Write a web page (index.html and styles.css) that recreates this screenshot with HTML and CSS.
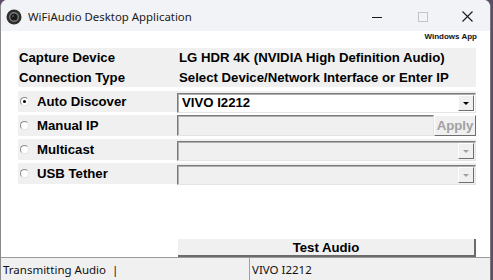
FILE: index.html
```html
<!DOCTYPE html>
<html>
<head>
<meta charset="utf-8">
<link rel="stylesheet" href="styles.css">
</head>
<body>
<div class="window">
  <div class="titlebar">
    <svg class="appicon" width="16" height="16" viewBox="0 0 16 16">
      <circle cx="8" cy="8" r="7.5" fill="#2e2e2e"/>
      <circle cx="8" cy="8" r="5" fill="#7a7a7a"/>
      <circle cx="8" cy="8" r="3.6" fill="#1c1c1c"/>
      <circle cx="7" cy="7" r="1" fill="#555"/>
    </svg>
    <span class="title">WiFiAudio Desktop Application</span>
    <div class="caption">
      <span class="cbtn min"><svg width="10" height="10" viewBox="0 0 10 10"><path d="M0 5.5H10" stroke="#1a1a1a" stroke-width="1"/></svg></span>
      <span class="cbtn max"><svg width="10" height="10" viewBox="0 0 10 10"><rect x="0.5" y="0.5" width="9" height="9" fill="none" stroke="#c4c4c4" stroke-width="1"/></svg></span>
      <span class="cbtn close"><svg width="11" height="11" viewBox="0 0 11 11"><path d="M0.5 0.5L10.5 10.5M10.5 0.5L0.5 10.5" stroke="#1a1a1a" stroke-width="1.1"/></svg></span>
    </div>
  </div>
  <div class="client">
    <div class="brand">Windows App</div>
    <div class="info">
      <div class="irow"><span class="lbl">Capture Device</span><span class="val">LG HDR 4K (NVIDIA High Definition Audio)</span></div>
      <div class="irow"><span class="lbl">Connection Type</span><span class="val">Select Device/Network Interface or Enter IP</span></div>
    </div>
    <div class="opts">
      <div class="orow">
        <label class="radio"><span class="rb checked"></span>Auto Discover</label>
        <div class="combo"><span class="ctext">VIVO I2212</span><span class="dd"><span class="tri"></span></span></div>
      </div>
      <div class="orow">
        <label class="radio"><span class="rb"></span>Manual IP</label>
        <div class="ipwrap"><div class="textbox dis"></div><span class="apply">Apply</span></div>
      </div>
      <div class="orow">
        <label class="radio"><span class="rb"></span>Multicast</label>
        <div class="combo dis"><span class="ctext"></span><span class="dd"><span class="tri"></span></span></div>
      </div>
      <div class="orow">
        <label class="radio"><span class="rb"></span>USB Tether</label>
        <div class="combo dis"><span class="ctext"></span><span class="dd"><span class="tri"></span></span></div>
      </div>
    </div>
    <div class="spacer"></div>
    <div class="btnrow"><span class="testbtn">Test Audio</span></div>
  </div>
  <div class="statusbar">
    <div class="panel p1">Transmitting Audio &nbsp;|</div>
    <div class="panel p2">VIVO I2212</div>
  </div>
</div>
</body>
</html>
```
FILE: styles.css
```css
html, body {
  margin: 0;
  padding: 0;
}
body {
  width: 493px;
  height: 280px;
  background: #5b4d66;
  overflow: hidden;
}
.window {
  width: 491px;
  height: 280px;
  background: #ffffff;
  border-radius: 7px 7px 0 0;
  display: flex;
  flex-direction: column;
  overflow: hidden;
  border-right: 1px solid #7a7a7a;
  border-left: 1px solid #8a8a8a;
  box-sizing: border-box;
}
.titlebar {
  height: 29px;
  flex: none;
  background: #f2f3f6;
  display: flex;
  align-items: center;
  padding-left: 5px;
  padding-top: 2px;
}
.appicon {
  flex: none;
}
.title {
  margin-left: 6px;
  font-family: "Noto Sans", sans-serif;
  font-size: 11.4px;
  color: #1a1a1a;
}
.caption {
  margin-left: auto;
  display: flex;
  align-items: center;
  height: 29px;
}
.cbtn {
  width: 45px;
  height: 29px;
  display: flex;
  align-items: center;
  justify-content: center;
}
.cbtn.min { width: 46px; }
.cbtn.close { margin-right: 0; }
.client {
  flex: 1;
  display: flex;
  flex-direction: column;
  padding: 0 14px 0 17px;
  font-family: "Liberation Sans", Arial, sans-serif;
  font-weight: bold;
  font-size: 13.2px;
  color: #000;
}
.brand {
  align-self: flex-end;
  font-size: 8px;
  font-weight: bold;
  margin-top: 0;
  margin-right: -1px;
  height: 12px;
  line-height: 12px;
  color: #111;
}
.info {
  margin-top: 5px;
  background: #f0f0f0;
  display: flex;
  flex-direction: column;
  padding: 0;
}
.irow {
  height: 19.5px;
  display: flex;
  align-items: center;
}
.lbl {
  width: 160px;
  flex: none;
  padding-left: 1px;
}
.opts {
  margin-top: 4px;
  display: flex;
  flex-direction: column;
  gap: 3px;
}
.orow {
  height: 21px;
  background: #f0f0f0;
  display: flex;
  align-items: center;
}
.radio {
  width: 159px;
  flex: none;
  display: flex;
  align-items: center;
  padding-left: 2px;
  box-sizing: border-box;
}
.rb {
  width: 9px;
  height: 9px;
  border-radius: 50%;
  box-sizing: border-box;
  background: #fff;
  border: 1px solid;
  border-color: #8a8a8a #e6e6e6 #e6e6e6 #8a8a8a;
  margin-right: 8px;
  position: relative;
  flex: none;
}
.rb.checked::after {
  content: "";
  position: absolute;
  left: 2px;
  top: 2px;
  width: 3px;
  height: 3px;
  border-radius: 50%;
  background: #000;
}
.combo {
  flex: 1;
  height: 20px;
  box-sizing: border-box;
  background: #fff;
  border: 1px solid;
  border-color: #7a7a7a #e4e4e4 #e4e4e4 #7a7a7a;
  box-shadow: inset 1px 1px 0 #b0b0b0;
  display: flex;
  align-items: center;
  margin-top: 2px;
}
.combo.dis {
  background: #f0f0f0;
}
.ctext {
  flex: 1;
  padding-left: 4px;
}
.dd {
  width: 16px;
  height: 16px;
  margin-right: 1px;
  box-sizing: border-box;
  background: #f0f0f0;
  border: 1px solid;
  border-color: #fdfdfd #6e6e6e #6e6e6e #fdfdfd;
  display: flex;
  align-items: center;
  justify-content: center;
}
.tri {
  width: 0;
  height: 0;
  border-left: 3px solid transparent;
  border-right: 3px solid transparent;
  border-top: 3px solid #000;
  margin-top: 1px;
}
.combo.dis .tri {
  border-top-color: #a0a0a0;
}
.ipwrap {
  flex: 1;
  display: flex;
  height: 21px;
}
.textbox {
  flex: 1;
  box-sizing: border-box;
  background: #f0f0f0;
  border: 1px solid;
  border-color: #7a7a7a #e4e4e4 #e4e4e4 #7a7a7a;
  box-shadow: inset 1px 1px 0 #b0b0b0;
}
.apply {
  width: 42px;
  box-sizing: border-box;
  background: #f0f0f0;
  border: 1px solid;
  border-color: #fff #6e6e6e #6e6e6e #fff;
  color: #a0a0a0;
  display: flex;
  align-items: center;
  justify-content: center;
}
.spacer {
  flex: 1;
}
.btnrow {
  display: flex;
  padding-left: 160px;
}
.testbtn {
  flex: 1;
  height: 18px;
  box-sizing: border-box;
  background: #f0f0f0;
  border-right: 2px solid #6b6b6b;
  border-bottom: 2px solid #6b6b6b;
  display: flex;
  align-items: center;
  justify-content: center;
}
.statusbar {
  height: 22px;
  flex: none;
  display: flex;
  background: #f0f0f0;
  border-top: 1px solid #9a9a9a;
  font-family: "Noto Sans", sans-serif;
  font-size: 11.5px;
  color: #111;
}
.panel {
  display: flex;
  align-items: center;
  padding-left: 2px;
}
.p1 {
  width: 246px;
  border-right: 1px solid #a0a0a0;
}
.p2 {
  flex: 1;
  padding-left: 2px;
}
```
